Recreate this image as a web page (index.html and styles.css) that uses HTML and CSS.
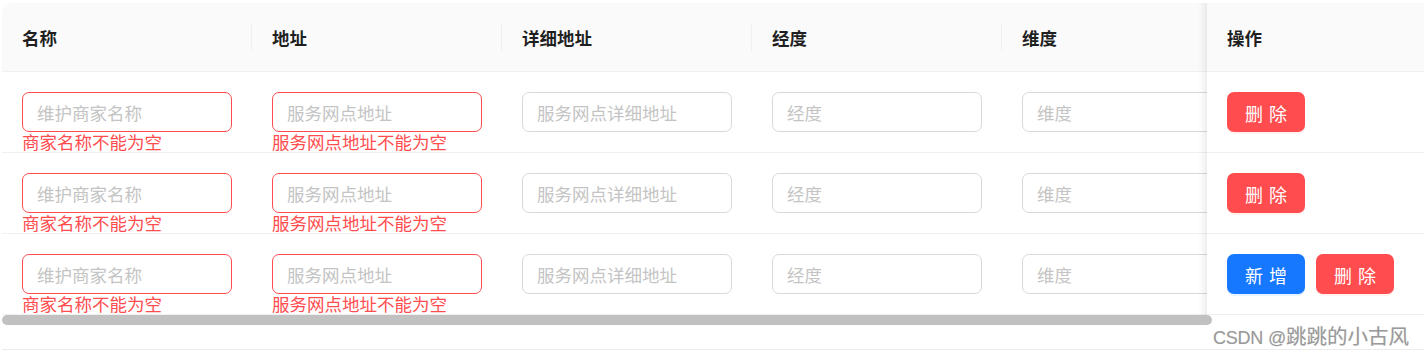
FILE: index.html
```html
<!DOCTYPE html>
<html lang="zh-CN">
<head>
<meta charset="utf-8">
<title>表格</title>
<link rel="stylesheet" href="styles.css">
</head>
<body>
<div class="page">
  <div class="table">
    <div class="scroll">
      <div class="grid">
        <div class="th sep">名称</div>
        <div class="th sep">地址</div>
        <div class="th sep">详细地址</div>
        <div class="th sep">经度</div>
        <div class="th sep">维度</div>

        <div class="td"><input class="inp err" placeholder="维护商家名称"><div class="msg">商家名称不能为空</div></div>
        <div class="td"><input class="inp err" placeholder="服务网点地址"><div class="msg">服务网点地址不能为空</div></div>
        <div class="td"><input class="inp" placeholder="服务网点详细地址"></div>
        <div class="td"><input class="inp" placeholder="经度"></div>
        <div class="td"><input class="inp" placeholder="维度"></div>

        <div class="td"><input class="inp err" placeholder="维护商家名称"><div class="msg">商家名称不能为空</div></div>
        <div class="td"><input class="inp err" placeholder="服务网点地址"><div class="msg">服务网点地址不能为空</div></div>
        <div class="td"><input class="inp" placeholder="服务网点详细地址"></div>
        <div class="td"><input class="inp" placeholder="经度"></div>
        <div class="td"><input class="inp" placeholder="维度"></div>

        <div class="td"><input class="inp err" placeholder="维护商家名称"><div class="msg">商家名称不能为空</div></div>
        <div class="td"><input class="inp err" placeholder="服务网点地址"><div class="msg">服务网点地址不能为空</div></div>
        <div class="td"><input class="inp" placeholder="服务网点详细地址"></div>
        <div class="td"><input class="inp" placeholder="经度"></div>
        <div class="td"><input class="inp" placeholder="维度"></div>
      </div>
    </div>
    <div class="fixed">
      <div class="th">操作</div>
      <div class="td actions"><button class="btn danger"><span>删</span>除</button></div>
      <div class="td actions"><button class="btn danger"><span>删</span>除</button></div>
      <div class="td actions"><button class="btn primary"><span>新</span>增</button><button class="btn danger"><span>删</span>除</button></div>
    </div>
  </div>
  <div class="hscroll"><div class="thumb"></div></div>
  <div class="footer"><span class="watermark"><span class="wm-latin">CSDN @</span><span class="wm-cjk">跳跳的小古风</span></span></div>
</div>
</body>
</html>
```

FILE: styles.css
```css
html, body {
  margin: 0;
  padding: 0;
  background: #ffffff;
}
body {
  font-family: "Noto Sans CJK SC", "Liberation Sans", sans-serif;
  font-size: 17.5px;
  color: rgba(0, 0, 0, 0.88);
}
.page {
  padding: 3px 0 0 2px;
  width: 1422px;
}
.table {
  display: flex;
  width: 1422px;
}
.scroll {
  width: 1205px;
  overflow: hidden;
  flex: none;
}
.grid {
  display: grid;
  grid-template-columns: repeat(5, 250px);
  width: 1250px;
}
.th {
  position: relative;
  height: 68px;
  box-sizing: content-box;
  background: #fafafa;
  border-bottom: 1px solid #f0f0f0;
  padding: 0 20px;
  display: flex;
  align-items: center;
  font-weight: 700;
  font-size: 17.5px;
  color: rgba(0, 0, 0, 0.88);
}
.grid .th:first-child {
  border-top-left-radius: 10px;
}
.sep::before {
  content: "";
  position: absolute;
  right: 0;
  top: 20px;
  width: 1px;
  height: 28px;
  background: #f0f0f0;
}
.td {
  border-bottom: 1px solid #f0f0f0;
  padding: 20px 20px 0;
  box-sizing: border-box;
  height: 81px;
  background: #ffffff;
}
.inp {
  display: block;
  width: 210px;
  height: 40px;
  box-sizing: border-box;
  border: 1px solid #d9d9d9;
  border-radius: 7px;
  padding: 0 14px;
  font-family: "Noto Sans CJK SC", "Liberation Sans", sans-serif;
  font-size: 17.5px;
  color: rgba(0, 0, 0, 0.88);
  background: #ffffff;
  outline: none;
}
.inp::placeholder {
  color: #c4c4c4;
}
.inp.err {
  border-color: #ff4d4f;
}
.msg {
  color: #ff4d4f;
  font-size: 17.5px;
  line-height: 20px;
  white-space: nowrap;
}
.fixed {
  position: relative;
  width: 217px;
  flex: none;
  background: #ffffff;
}
.fixed::before {
  content: "";
  position: absolute;
  left: -30px;
  top: 0;
  bottom: 0;
  width: 30px;
  box-shadow: inset -10px 0 8px -8px rgba(5, 5, 5, 0.1);
  pointer-events: none;
}
.fixed .th {
  padding-left: 20px;
}
.fixed .td {
  padding-left: 20px;
}
.actions {
  display: flex;
  gap: 11px;
  align-items: flex-start;
}
.btn {
  width: 78px;
  height: 40px;
  border: none;
  border-radius: 7px;
  color: #ffffff;
  font-family: "Noto Sans CJK SC", "Liberation Sans", sans-serif;
  font-size: 18px;
  padding: 1px 0 0 0;
  display: flex;
  align-items: center;
  justify-content: center;
  cursor: pointer;
}
.btn span {
  letter-spacing: 0.34em;
}
.danger {
  background: #ff4d4f;
  box-shadow: 0 2px 0 rgba(255, 38, 5, 0.06);
}
.primary {
  background: #1677ff;
  box-shadow: 0 2px 0 rgba(5, 145, 255, 0.1);
}
.hscroll {
  height: 10px;
  width: 1422px;
}
.thumb {
  width: 1210px;
  height: 10px;
  border-radius: 5px;
  background: #c1c1c1;
}
.footer {
  height: 24px;
  border-bottom: 1px solid #ececec;
  display: flex;
  justify-content: flex-end;
  padding-right: 15px;
}
.watermark {
  display: flex;
  align-items: baseline;
  line-height: 21px;
  color: #9a9a9a;
  text-shadow: 0 0 1px rgba(0, 0, 0, 0.15);
  white-space: pre;
}
.wm-latin {
  font-family: "Liberation Sans Narrow", "Liberation Sans", sans-serif;
  font-size: 18px;
  letter-spacing: -0.2px;
}
.wm-cjk {
  font-family: "Noto Sans CJK SC", sans-serif;
  font-size: 20.5px;
}
```
